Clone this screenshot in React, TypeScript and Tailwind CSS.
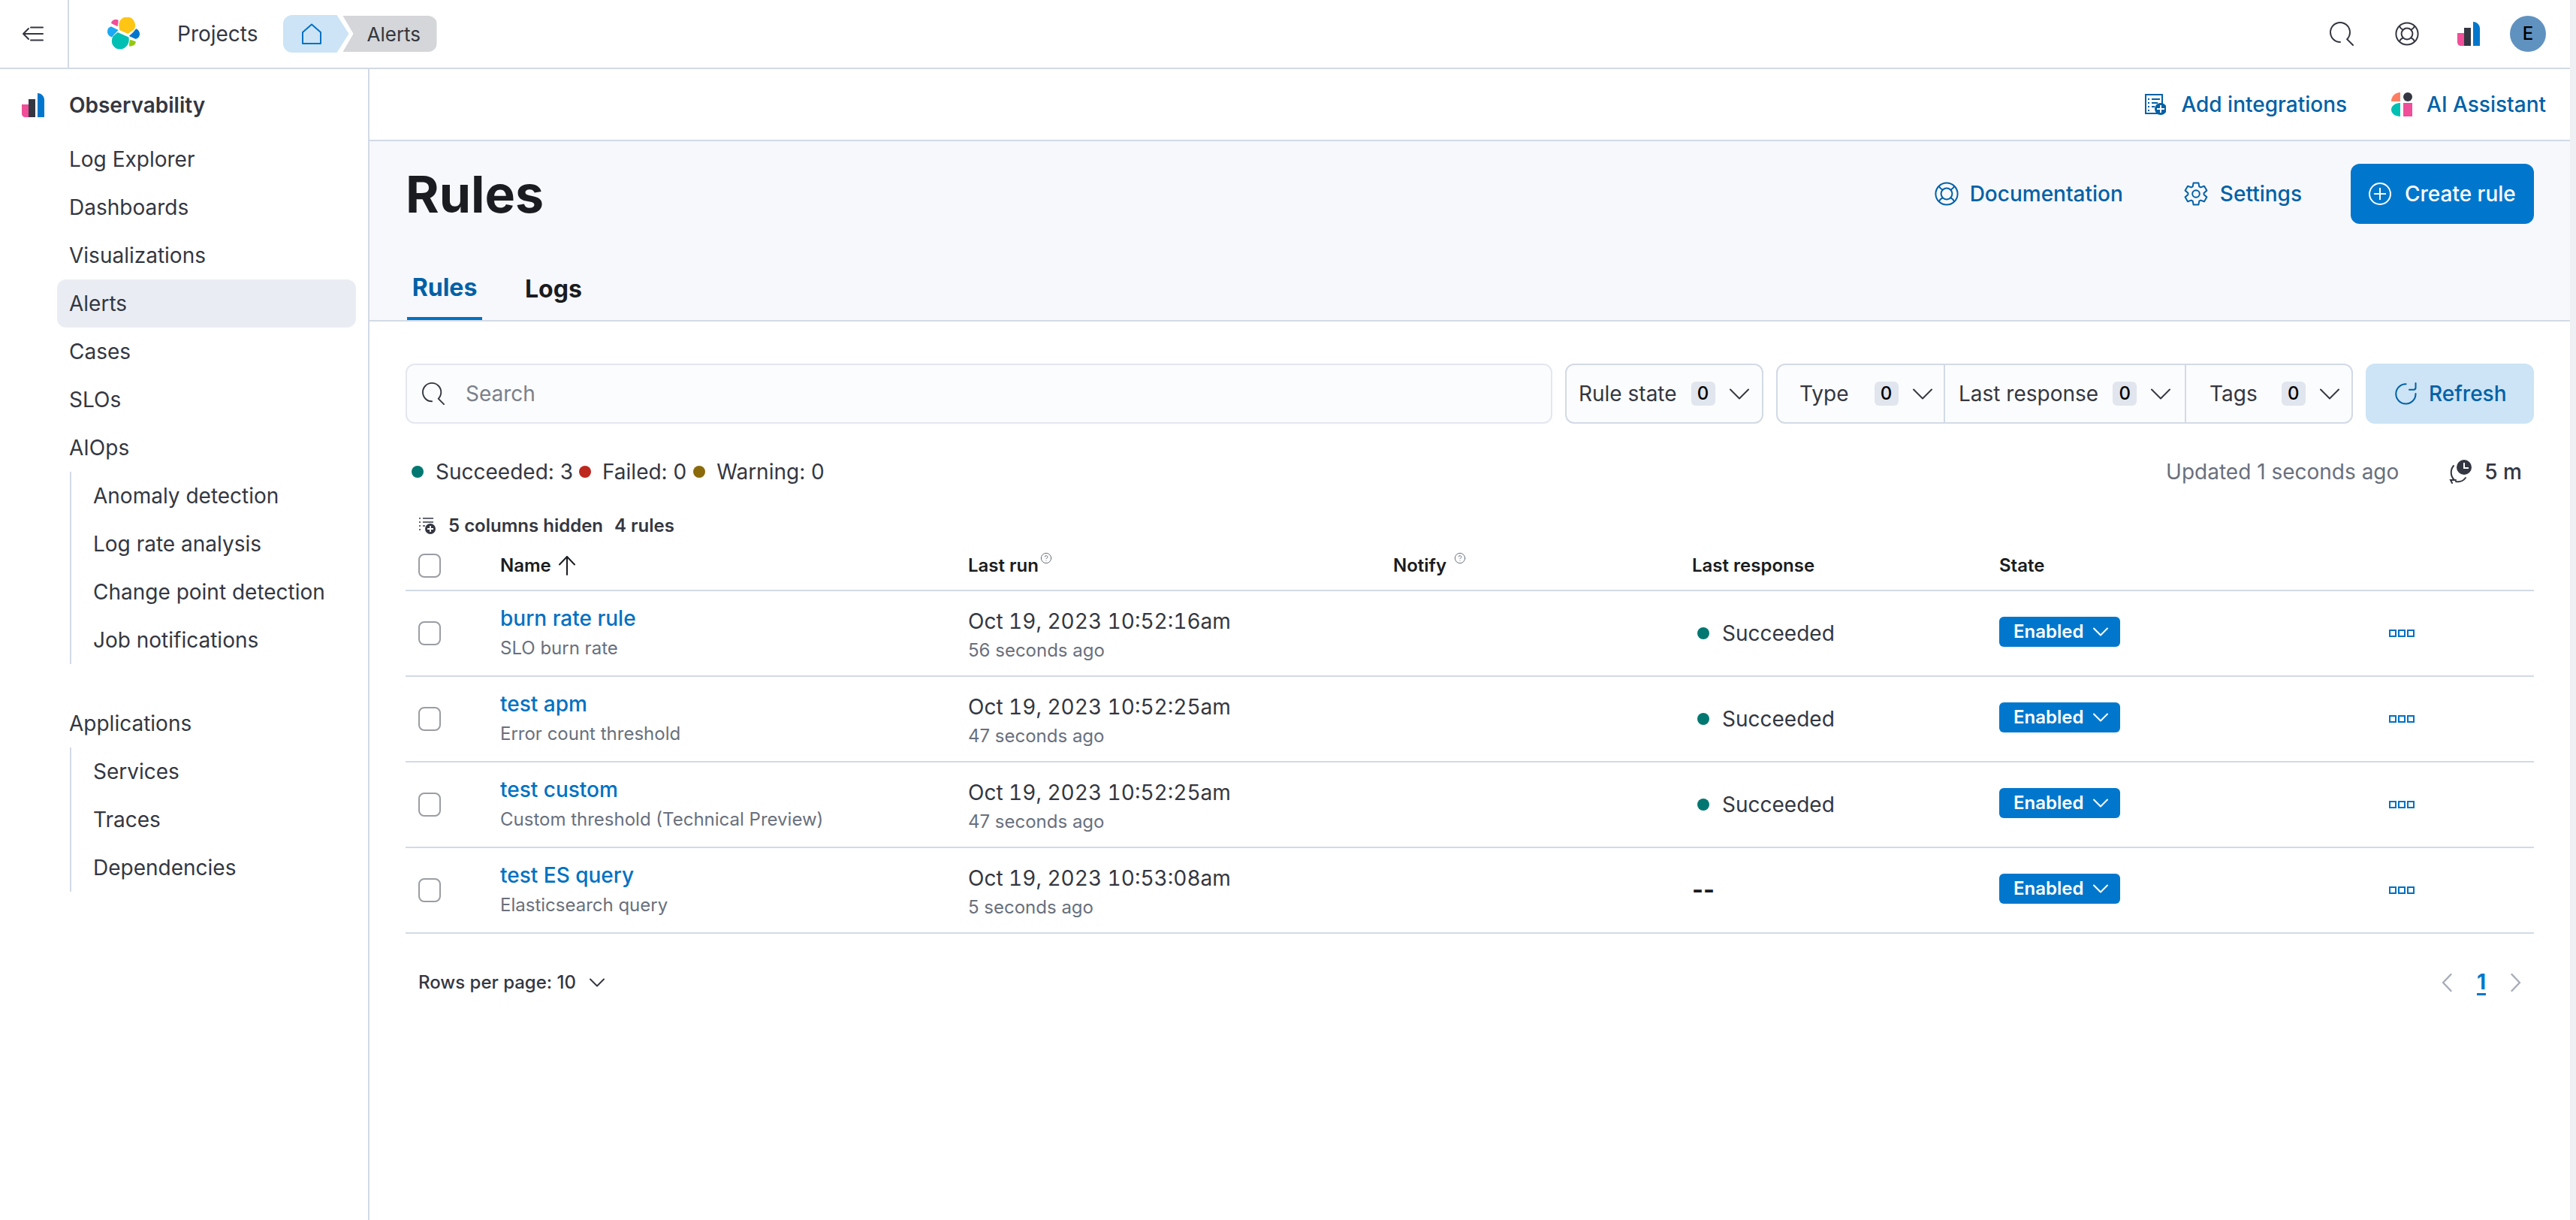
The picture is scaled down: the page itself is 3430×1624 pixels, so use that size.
import React from "react";
import { CircleHelp } from "lucide-react";

const BLUE = "#0061a6";

function gearPath() {
  const pts: string[] = [];
  for (let k = 0; k < 6; k++) {
    const a = -90 + 60 * k;
    const p = (r: number, d: number) => {
      const t = ((a + d) * Math.PI) / 180;
      return `${(8 + r * Math.cos(t)).toFixed(2)} ${(8 + r * Math.sin(t)).toFixed(2)}`;
    };
    pts.push(p(5.3, -24), p(7.5, -13), p(7.5, 13), p(5.3, 24));
  }
  return "M" + pts.join(" L") + " Z";
}

function Logo() {
  return (
    <svg width="45" height="44" viewBox="11 12 46 44">
      <path fill="#fec514" d="M27.5 22C28 14 34 11 39 11C46 11 50 17 50 23C50 26 48 29 46 30L40 34L28.5 29Z" />
      <path fill="#00bfb3" d="M26 32L41 38.5C42 42 41 46 40 48C37 53 33 55 29 55C23 55 18 50 18 44C18 41 19 38 20 37Z" />
      <path fill="#1ba9f5" d="M17 24L27 29L18 38.5C15 38 12 35 12 31C12 27 14 25 17 24Z" />
      <path fill="#0077cc" d="M47 32L51 27C54 28 56 31 56 34C56 38 53 41 50 41L41.5 37Z" />
      <path fill="#f04e98" d="M19 16C22 14 26 14 27 16C27 19 26 21 26 24L17.5 20C17 18 18 17 19 16Z" />
      <path fill="#93c90e" d="M43 42L50.5 44.5C51 48 48 51 42 51C41 48 42 45 43 42Z" />
    </svg>
  );
}

function ObsIcon({ size = 32 }: { size?: number }) {
  return (
    <svg width={(size * 30) / 32} height={size} viewBox="0 0 30 32">
      <path fill="#f04e98" d="M0 15H9V32H5C2 32 0 30 0 27Z" />
      <rect x="9" y="8" width="9" height="24" fill="#343741" />
      <path fill="#0077cc" d="M21 0C26 0 30 4 30 9V32H21Z" />
    </svg>
  );
}

function HelpIcon({ color, size = 32 }: { color: string; size?: number }) {
  return (
    <svg width={size} height={size} viewBox="0 0 16 16" fill="none" stroke={color} strokeWidth="1">
      <circle cx="8" cy="8" r="7.3" />
      <circle cx="8" cy="8" r="3.7" />
      <path d="M5.4 5.4C4 4.6 3.2 3.8 2.9 2.9M10.6 5.4C12 4.6 12.8 3.8 13.1 2.9M5.4 10.6C4 11.4 3.2 12.2 2.9 13.1M10.6 10.6C12 11.4 12.8 12.2 13.1 13.1" />
    </svg>
  );
}

function SearchIcon({ color, size = 32 }: { color: string; size?: number }) {
  return (
    <svg width={size} height={size} viewBox="0 0 16 16" fill={color}>
      <path d="M11.271 11.978l3.872 3.873a.502.502 0 00.708 0 .502.502 0 000-.708l-3.565-3.564c2.38-2.747 2.267-6.923-.342-9.532-2.73-2.73-7.17-2.73-9.898 0-2.728 2.729-2.728 7.17 0 9.9a6.955 6.955 0 004.949 2.05.5.5 0 000-1 5.96 5.96 0 01-4.242-1.757 6.01 6.01 0 010-8.486c2.337-2.34 6.143-2.34 8.484 0a6.01 6.01 0 010 8.486.5.5 0 00.034.738z" />
    </svg>
  );
}

function Chevron({ w = 26, h = 15, color = "#343741", sw = 2 }: { w?: number; h?: number; color?: string; sw?: number }) {
  return (
    <svg width={w} height={h} viewBox={`0 0 ${w} ${h}`} fill="none" stroke={color} strokeWidth={sw} strokeLinecap="round" strokeLinejoin="round">
      <path d={`M1 1.5L${w / 2} ${h - 1.5}L${w - 1} 1.5`} />
    </svg>
  );
}

function FilterCell({ label, pl, width, extra = 0, divider }: { label: string; pl: number; width: number; extra?: number; divider?: boolean }) {
  return (
    <div
      className={`flex h-full shrink-0 items-center gap-[19px] ${divider ? "border-l-2 border-[#d3dae6]" : ""}`}
      style={{ width, paddingLeft: pl }}
    >
      <span className="whitespace-nowrap text-[28px] text-[#343741]" style={{ marginRight: extra }}>{label}</span>
      <span className="flex h-[32px] w-[32px] items-center justify-center rounded-[6px] bg-[#e0e5ee] text-[24px] font-medium text-[#000000]">0</span>
      <Chevron />
    </div>
  );
}

const navTop = ["Log Explorer", "Dashboards", "Visualizations", "Alerts", "Cases", "SLOs", "AIOps"];
const aiops = ["Anomaly detection", "Log rate analysis", "Change point detection", "Job notifications"];
const apps = ["Services", "Traces", "Dependencies"];

function NavItem({ label, active }: { label: string; active?: boolean }) {
  return (
    <div className={`flex h-[64px] items-center rounded-[12px] pl-[16px] text-[28px] text-[#343741] ${active ? "bg-[#e9edf3]" : ""}`}>{label}</div>
  );
}

function SubNav({ items }: { items: string[] }) {
  return (
    <div className="ml-[17px] flex flex-col border-l-2 border-[#d3dae6] pl-[29px]">
      {items.map((i) => (
        <div key={i} className="flex h-[64px] items-center text-[28px] text-[#343741]">{i}</div>
      ))}
    </div>
  );
}

function Sidebar() {
  return (
    <aside className="flex w-[492px] shrink-0 flex-col border-r-2 border-[#d3dae6] pt-[32px]">
      <div className="flex h-[32px] items-center pl-[29px]">
        <ObsIcon />
        <span className="ml-[33px] text-[28px] font-semibold text-[#343741]">Observability</span>
      </div>
      <div className="ml-[76px] mt-[16px] flex w-[398px] flex-col self-start pt-[8px]">
        {navTop.map((n) => (
          <NavItem key={n} label={n} active={n === "Alerts"} />
        ))}
        <SubNav items={aiops} />
        <div className="mt-[47px]">
          <NavItem label="Applications" />
        </div>
        <SubNav items={apps} />
      </div>
    </aside>
  );
}

function TopBar() {
  return (
    <header className="flex h-[92px] shrink-0 items-center border-b-2 border-[#d3dae6]">
      <div className="flex h-full w-[92px] items-center justify-center border-r-2 border-[#d3dae6] pr-[2px]">
        <svg width="30" height="20" viewBox="0 0 30 20" fill="none" stroke="#343741" strokeWidth="2" strokeLinecap="round" strokeLinejoin="round">
          <path d="M2 10H28M12 1.5H28M12 18.5H28M9 3L2 10L9 17" />
        </svg>
      </div>
      <div className="ml-[50px] flex">
        <Logo />
      </div>
      <span className="ml-[49px] text-[28px] text-[#343741]">Projects</span>
      <div className="ml-[33px] flex items-center">
        <div className="flex h-[50px] w-[88px] items-center rounded-l-[12px] bg-[#cce4f5] pl-[25px] [clip-path:polygon(0_0,72px_0,100%_50%,72px_100%,0_100%)]">
          <svg width="26" height="28" viewBox="0 0 26 28" fill="none" stroke="#0071c2" strokeWidth="2" strokeLinejoin="round">
            <path d="M13 1.5L25 12V27H1V12Z" />
          </svg>
        </div>
        <div className="-ml-[8px] flex h-[48px] w-[125px] items-center rounded-r-[12px] bg-[#d4d6d9] pl-[32px] text-[26px] text-[#343741] [clip-path:polygon(0_0,100%_0,100%_100%,0_100%,14px_50%)]">
          Alerts
        </div>
      </div>
      <div className="ml-auto flex items-center pr-[32px]">
        <SearchIcon color="#343741" />
        <div className="ml-[55px]">
          <HelpIcon color="#343741" />
        </div>
        <div className="ml-[51px]">
          <ObsIcon />
        </div>
        <div className="ml-[40px] flex h-[48px] w-[48px] items-center justify-center rounded-full bg-[#6092c0] text-[24px] font-medium text-[#000000]">E</div>
      </div>
    </header>
  );
}

function ActionBar() {
  return (
    <div className="flex h-[96px] shrink-0 items-center justify-end border-b-2 border-[#d3dae6] pr-[32px]">
      <svg width="28" height="28" viewBox="0 0 28 28" fill="none">
        <rect x="1" y="1" width="22" height="25" stroke={BLUE} strokeWidth="2" />
        <path d="M4 7H6M4 12H6M4 17H6M4 22H6M9 7H20M9 12H17M9 17H13" stroke={BLUE} strokeWidth="2" />
        <circle cx="21" cy="20" r="8" fill={BLUE} />
        <path d="M21 15V25M16 20H26" stroke="#fff" strokeWidth="2" />
      </svg>
      <span className="ml-[20px] text-[28px] font-medium text-[#0061a6]">Add integrations</span>
      <svg className="ml-[59px]" width="28" height="32" viewBox="0 0 28 32">
        <path fill="#ff7e62" d="M0 12C0 5 5 0 12 0V12Z" />
        <circle cx="22" cy="6" r="6" fill="#343741" />
        <path fill="#00bfb3" d="M12 14V32C5 32 0 28 0 23C0 18 5 14 12 14Z" />
        <rect x="16" y="14" width="12" height="18" fill="#f04e98" />
      </svg>
      <span className="ml-[19px] text-[28px] font-medium text-[#0061a6]">AI Assistant</span>
    </div>
  );
}

function PageHeader() {
  return (
    <div className="flex h-[240px] shrink-0 flex-col border-b-2 border-[#d3dae6] bg-[#f7f8fc] pl-[48px] pr-[48px]">
      <div className="flex h-[140px] shrink-0 items-center">
        <h1 className="text-[68px] font-bold leading-none text-[#1a1c21]">Rules</h1>
        <div className="ml-auto flex items-center">
          <HelpIcon color={BLUE} />
          <span className="ml-[15px] text-[28px] font-medium text-[#0061a6]">Documentation</span>
          <svg className="ml-[81px]" width="32" height="32" viewBox="0 0 16 16" fill="none" stroke={BLUE} strokeWidth="1" strokeLinejoin="round">
            <path d={gearPath()} />
            <circle cx="8" cy="8" r="2.4" />
          </svg>
          <span className="ml-[16px] text-[28px] font-medium text-[#0061a6]">Settings</span>
          <button className="ml-[65px] flex h-[80px] w-[244px] items-center rounded-[12px] bg-[#0077cc] pl-[24px]">
            <svg width="30" height="30" viewBox="0 0 30 30" fill="none" stroke="#fff" strokeWidth="2">
              <circle cx="15" cy="15" r="14" />
              <path d="M15 7V23M7 15H23" />
            </svg>
            <span className="ml-[18px] text-[28px] font-medium text-[#ffffff]">Create rule</span>
          </button>
        </div>
      </div>
      <div className="flex flex-1 items-stretch">
        <div className="ml-[2px] flex w-[100px] items-center justify-center border-b-4 border-[#0071c2] pt-[16px] text-[32px] font-bold text-[#0061a6]">Rules</div>
        <div className="ml-[51px] flex items-center px-[6px] pt-[16px] text-[32px] font-bold text-[#1a1c21]">Logs</div>
      </div>
    </div>
  );
}

function Filters() {
  return (
    <div className="flex h-[80px] items-stretch">
      <div className="flex w-[1527px] items-center rounded-[12px] border-2 border-[#e4e7f0] bg-[#fbfcfd] pl-[20px]">
        <SearchIcon color="#343741" size={30} />
        <span className="ml-[28px] text-[28px] text-[#7b808b]">Search</span>
      </div>
      <div className="ml-[17px] flex w-[264px] items-center rounded-[12px] border-2 border-[#d3dae6] bg-[#fbfcfd]">
        <FilterCell label="Rule state" pl={16} width={260} />
      </div>
      <div className="ml-[17px] flex w-[768px] items-center overflow-hidden rounded-[12px] border-2 border-[#d3dae6] bg-[#fbfcfd]">
        <FilterCell label="Type" pl={29} width={221} extra={15} />
        <FilterCell label="Last response" pl={18} width={321} divider />
        <FilterCell label="Tags" pl={31} width={222} extra={13} divider />
      </div>
      <button className="ml-[17px] flex w-[224px] items-center rounded-[12px] bg-[#cce4f5] pl-[38px]">
        <svg width="30" height="30" viewBox="0 0 24 24" fill="none" stroke={BLUE} strokeWidth="1.6" strokeLinecap="round" strokeLinejoin="round">
          <path d="M12.5 1.8A10.5 10.5 0 1 0 22.8 12" />
          <path d="M22.8 0.8V5.6C22.8 7 22 7.8 20.6 7.8H16" />
        </svg>
        <span className="ml-[16px] text-[28px] font-medium text-[#0061a6]">Refresh</span>
      </button>
    </div>
  );
}

function Dot({ color }: { color: string }) {
  return <span className="inline-block h-[16px] w-[16px] shrink-0 rounded-full" style={{ backgroundColor: color }} />;
}

function StatusRow() {
  return (
    <div className="mt-[36px] flex h-[56px] items-center pl-[8px] pr-[16px] text-[28px] text-[#343741]">
      <Dot color="#007871" />
      <span className="ml-[16px]">Succeeded: 3</span>
      <span className="ml-[8px] flex"><Dot color="#bd271e" /></span>
      <span className="ml-[15px]">Failed: 0</span>
      <span className="ml-[9px] flex"><Dot color="#8a6a0a" /></span>
      <span className="ml-[15px]">Warning: 0</span>
      <span className="ml-auto text-[#69707d]">Updated 1 seconds ago</span>
      <svg className="ml-[67px]" width="31" height="32" viewBox="0 0 31 32" fill="none" stroke="#343741" strokeWidth="2" strokeLinecap="round">
        <path d="M7 27C2 22 1 14 6 8" />
        <path d="M4 31L2 27H9" />
        <path d="M9 29C14 30 19 28 22 24" />
        <circle cx="20" cy="10" r="10" fill="#343741" stroke="none" />
        <path d="M20 4V11H26" stroke="#fff" strokeWidth="2" strokeLinecap="butt" />
      </svg>
      <span className="ml-[16px] font-medium">5 m</span>
    </div>
  );
}

const GRID = "grid grid-cols-[126px_623px_566px_398px_409px_516px_1fr] items-center";

function Checkbox() {
  return <div className="ml-[17px] h-[32px] w-[30px] rounded-[8px] border-2 border-[#9a9da3] bg-white" />;
}

const rows = [
  { name: "burn rate rule", sub: "SLO burn rate", date: "Oct 19, 2023 10:52:16am", ago: "56 seconds ago", ok: true },
  { name: "test apm", sub: "Error count threshold", date: "Oct 19, 2023 10:52:25am", ago: "47 seconds ago", ok: true },
  { name: "test custom", sub: "Custom threshold (Technical Preview)", date: "Oct 19, 2023 10:52:25am", ago: "47 seconds ago", ok: true },
  { name: "test ES query", sub: "Elasticsearch query", date: "Oct 19, 2023 10:53:08am", ago: "5 seconds ago", ok: false },
];

function Table() {
  return (
    <div>
      <div className="mt-[24px] flex h-[40px] items-center pl-[18px] text-[24px] font-semibold text-[#343741]">
        <svg width="22" height="24" viewBox="0 0 22 24" fill="none" stroke="#343741" strokeWidth="1.6">
          <path d="M0 2H2M5 2H19M0 7H2M5 7H19M0 12H2M5 12H8M0 17H2" />
          <circle cx="15" cy="16" r="7" fill="#343741" stroke="none" />
          <path d="M15 12V20M11 16H19" stroke="#fff" strokeWidth="1.8" />
        </svg>
        <span className="ml-[17px]">5 columns hidden</span>
        <span className="ml-[15px]">4 rules</span>
      </div>
      <div className={`${GRID} h-[67px] border-b-2 border-[#d3dae6] text-[24px] font-semibold text-[#1a1c21]`}>
        <Checkbox />
        <div className="flex items-center gap-[9px]">
          Name
          <svg width="24" height="28" viewBox="0 0 24 28" fill="none" stroke="#1a1c21" strokeWidth="2" strokeLinecap="round" strokeLinejoin="round">
            <path d="M12 26V2M2 12.5L12 2L22 12.5" />
          </svg>
        </div>
        <div className="flex items-start gap-[2px]">
          Last run <CircleHelp size={16} strokeWidth={1.5} color="#69707d" />
        </div>
        <div className="flex items-start gap-[10px]">
          Notify <CircleHelp size={16} strokeWidth={1.5} color="#69707d" />
        </div>
        <div>Last response</div>
        <div>State</div>
        <div />
      </div>
      {rows.map((r) => (
        <div key={r.name} className={`${GRID} h-[114px] border-b-2 border-[#d3dae6]`}>
          <Checkbox />
          <div className="flex flex-col">
            <span className="text-[28px] font-medium leading-[40px] text-[#0071c2]">{r.name}</span>
            <span className="text-[24px] leading-[40px] text-[#69707d]">{r.sub}</span>
          </div>
          <div className="flex flex-col pt-[6px]">
            <span className="text-[28px] leading-[40px] tabular-nums text-[#343741]">{r.date}</span>
            <span className="text-[24px] leading-[38px] text-[#69707d]">{r.ago}</span>
          </div>
          <div />
          <div className="flex items-center">
            {r.ok ? (
              <>
                <span className="ml-[7px] flex"><Dot color="#007871" /></span>
                <span className="ml-[17px] text-[28px] text-[#343741]">Succeeded</span>
              </>
            ) : (
              <span className="text-[32px] font-bold text-[#1a1c21]">--</span>
            )}
          </div>
          <div className="mb-[4px]">
            <span className="flex h-[40px] w-[161px] items-center rounded-[6px] bg-[#0077cc] pl-[19px] text-[24px] font-semibold text-[#ffffff]">
              Enabled
              <span className="ml-[13px] flex">
                <Chevron w={20} h={12} color="#ffffff" />
              </span>
            </span>
          </div>
          <div>
            <svg className="ml-[3px]" width="34" height="10" viewBox="0 0 34 10" fill="none" stroke="#0071c2" strokeWidth="2">
              <rect x="1" y="1" width="8" height="8" />
              <rect x="13" y="1" width="8" height="8" />
              <rect x="25" y="1" width="8" height="8" />
            </svg>
          </div>
        </div>
      ))}
      <div className="flex h-[130px] items-center pl-[17px] pr-[17px]">
        <span className="text-[24px] font-medium text-[#343741]">Rows per page: 10</span>
        <span className="ml-[18px] flex">
          <Chevron w={20} h={12} />
        </span>
        <div className="ml-auto flex items-center">
          <svg width="14" height="26" viewBox="0 0 14 26" fill="none" stroke="#a6acb8" strokeWidth="2.4" strokeLinecap="round" strokeLinejoin="round">
            <path d="M12.5 2L2 13L12.5 24" />
          </svg>
          <span className="ml-[33px] border-b-[3px] border-[#0077cc] text-[28px] font-bold leading-[30px] text-[#0077cc]">1</span>
          <svg className="ml-[33px]" width="14" height="26" viewBox="0 0 14 26" fill="none" stroke="#a6acb8" strokeWidth="2.4" strokeLinecap="round" strokeLinejoin="round">
            <path d="M1.5 2L12 13L1.5 24" />
          </svg>
        </div>
      </div>
    </div>
  );
}

export default function App() {
  return (
    <div className="flex h-[1624px] w-full overflow-hidden bg-white font-['Inter',sans-serif]">
      <div className="flex min-w-0 flex-1 flex-col">
        <TopBar />
        <div className="flex min-h-0 flex-1">
          <Sidebar />
          <main className="flex min-w-0 flex-1 flex-col">
            <ActionBar />
            <PageHeader />
            <div className="px-[48px] pt-[56px]">
              <Filters />
              <StatusRow />
              <Table />
            </div>
          </main>
        </div>
      </div>
      <div className="w-[8px] shrink-0 bg-[#eff0f4]" />
    </div>
  );
}
